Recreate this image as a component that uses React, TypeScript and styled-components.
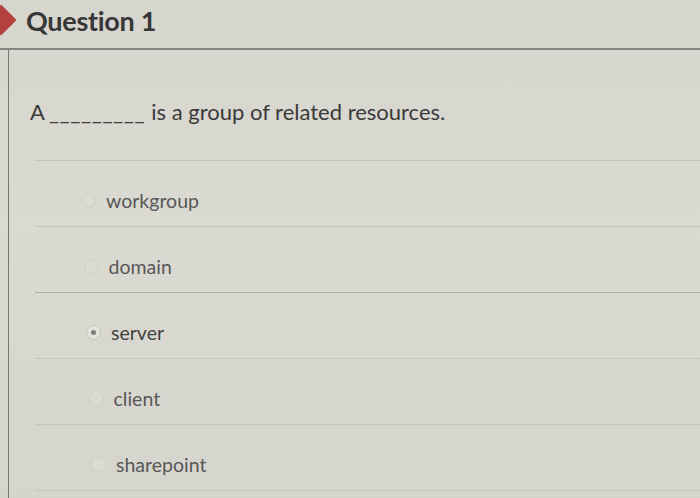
import React, { FC } from "react"
import styled, { createGlobalStyle } from "styled-components"

const GlobalStyle = createGlobalStyle`
  html, body {
    margin: 0;
    padding: 0;
    background: #d9d8d0;
  }
  body {
    font-family: Lato, "Liberation Sans", sans-serif;
  }
`

const StyledPage = styled.div`
  width: 700px;
  height: 498px;
  overflow: hidden;
  background: linear-gradient(180deg, #d7d6ce 0%, #dbdad2 45%, #d6d5cd 100%);
  display: flex;
  flex-direction: column;
`

const StyledHeader = styled.header`
  height: 50px;
  flex-shrink: 0;
  display: flex;
  align-items: center;
  border-bottom: 2px solid #85847f;
  box-sizing: border-box;
`

const StyledMarker = styled.div`
  width: 22px;
  height: 22px;
  margin-left: -10px;
  margin-top: -8px;
  background: #b4413f;
  transform: rotate(45deg);
  flex-shrink: 0;
`

const StyledTitle = styled.h1`
  margin: -7px 0 0 14px;
  font-size: 27px;
  font-weight: 700;
  color: #373737;
  letter-spacing: -0.3px;
`

const StyledBody = styled.div`
  flex: 1;
  margin-left: 8px;
  border-left: 1px solid #77766f;
  display: flex;
  flex-direction: column;
`

const StyledQuestion = styled.p`
  margin: 0;
  height: 110px;
  padding: 48px 0 0 21px;
  box-sizing: border-box;
  font-size: 22px;
  color: #3a3a3a;
`

const StyledBlank = styled.span`
  letter-spacing: 0.6px;
  margin: 0 6px 0 4px;
`

const StyledList = styled.div`
  margin-left: 26px;
  display: flex;
  flex-direction: column;
`

const StyledRow = styled.div<{ $strong?: boolean; $indent: number }>`
  height: 66px;
  box-sizing: border-box;
  border-top: 1px solid ${(p) => (p.$strong ? "#adaca5" : "#c6c5bd")};
  padding: 14px 0 0 ${(p) => 46 + p.$indent}px;
  display: flex;
  align-items: center;
  gap: 10px;
`

const StyledRadio = styled.span<{ $checked?: boolean }>`
  width: 15px;
  height: 15px;
  border-radius: 50%;
  box-sizing: border-box;
  border: 1px solid ${(p) => (p.$checked ? "#c4c3bb" : "#cfcec6")};
  background: ${(p) => (p.$checked ? "#e3e2db" : "#dcdbd3")};
  display: grid;
  place-items: center;
  flex-shrink: 0;
  &::after {
    content: "";
    width: 5px;
    height: 5px;
    border-radius: 50%;
    background: ${(p) => (p.$checked ? "#7f7f7d" : "transparent")};
  }
`

const StyledLabel = styled.span<{ $checked?: boolean }>`
  font-size: 19.5px;
  color: ${(p) => (p.$checked ? "#424242" : "#575757")};
`

const options = ["workgroup", "domain", "server", "client", "sharepoint"]

const App: FC = () => {
  const selected = "server"

  return (
    <>
      <GlobalStyle />
      <StyledPage>
        <StyledHeader>
          <StyledMarker />
          <StyledTitle>Question 1</StyledTitle>
        </StyledHeader>
        <StyledBody>
          <StyledQuestion>
            A<StyledBlank>_________</StyledBlank>is a group of related resources.
          </StyledQuestion>
          <StyledList>
            {options.map((option, i) => (
              <StyledRow key={option} $strong={i === 2} $indent={i * 2.5}>
                <StyledRadio $checked={option === selected} />
                <StyledLabel $checked={option === selected}>{option}</StyledLabel>
              </StyledRow>
            ))}
            <StyledRow $indent={0} />
          </StyledList>
        </StyledBody>
      </StyledPage>
    </>
  )
}

export default App
